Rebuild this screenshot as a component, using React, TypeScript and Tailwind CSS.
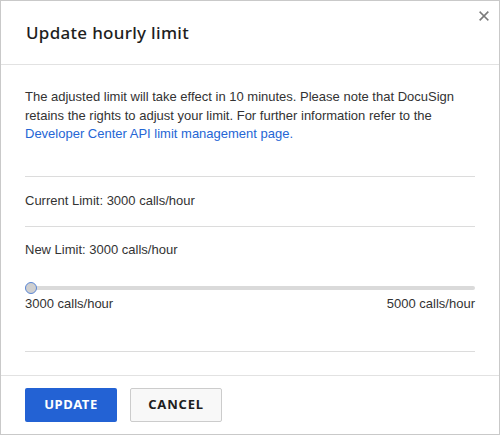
export default function App() {
  return (
    <div className="relative flex h-[435px] w-[500px] flex-col border border-[#c9c9c9] bg-white text-[#333]" style={{ fontFamily: '"Liberation Sans", Arial, sans-serif' }}>
      {/* Close */}
      <button className="absolute right-[9px] top-[9px] flex h-[12px] w-[12px] items-center justify-center text-[#7a7a7a]" aria-label="Close">
        <svg viewBox="0 0 12 12" className="h-[10px] w-[10px]">
          <path d="M1.5 1.5 L10.5 10.5 M10.5 1.5 L1.5 10.5" stroke="currentColor" strokeWidth="2" strokeLinecap="square" />
        </svg>
      </button>

      {/* Header */}
      <div className="flex h-[64px] shrink-0 items-center border-b border-[#e2e2e2] px-[25px]">
        <h2 className="text-[17px] font-medium tracking-[0.3px] text-[#1e1e1e]" style={{ fontFamily: '"Noto Sans", "Open Sans", sans-serif' }}>
          Update hourly limit
        </h2>
      </div>

      {/* Body */}
      <div className="flex flex-1 flex-col px-[24px] text-[13px]">
        <div className="h-[112px] border-b border-[#dcdcdc] pt-[23px]">
          <p className="leading-[18.5px]">
            The adjusted limit will take effect in 10 minutes. Please note that DocuSign retains the rights to adjust your limit. For further information refer to the{' '}
            <a href="#" className="text-[#2566d5]">Developer Center API limit management page.</a>
          </p>
        </div>

        <div className="flex h-[50px] items-center border-b border-[#dcdcdc] pb-[2px]">
          Current Limit: 3000 calls/hour
        </div>

        <div className="h-[125px] border-b border-[#dcdcdc] pt-[15px]">
          <div className="leading-[16px]">New Limit: 3000 calls/hour</div>
          <div className="relative mt-[24px] h-[12px]">
            <div className="absolute left-0 right-0 top-[4px] h-[4px] rounded-full bg-[#dadada]" />
            <div className="absolute left-0 top-0 h-[12px] w-[12px] rounded-full border-[1.5px] border-[#5b87d6] bg-[#cfcfcf]" />
          </div>
          <div className="mt-[2px] flex justify-between leading-[16px]">
            <span>3000 calls/hour</span>
            <span>5000 calls/hour</span>
          </div>
        </div>

        <div className="flex-1" />
      </div>

      {/* Footer */}
      <div className="flex h-[59px] shrink-0 items-start gap-[13px] border-t border-[#e2e2e2] px-[24px] pt-[12px]" style={{ fontFamily: '"Noto Sans", "Open Sans", sans-serif' }}>
        <button className="h-[34px] w-[92px] rounded-[2px] bg-[#2362d4] text-[13px] font-bold tracking-[0.6px] text-white">
          UPDATE
        </button>
        <button className="h-[34px] w-[92px] rounded-[2px] border border-[#cccccc] bg-[#f8f8f8] text-[13px] font-bold tracking-[0.8px] text-[#1e1e1e]">
          CANCEL
        </button>
      </div>
    </div>
  );
}
